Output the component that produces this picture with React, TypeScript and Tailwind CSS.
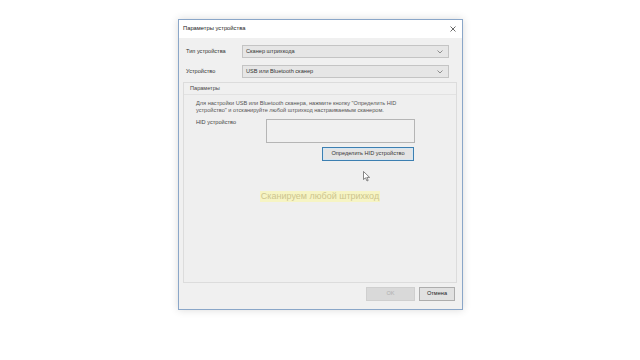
import React from "react";

function Combo({ text }: { text: string }) {
  return (
    <div className="flex h-[13px] flex-1 items-center justify-between border border-[#c4c4c4] bg-[#e6e6e6] pl-[3px] pr-[5px]">
      <span className="text-[5.6px] leading-none text-[#333]">{text}</span>
      <svg width="6" height="4" viewBox="0 0 6 4" className="shrink-0">
        <path d="M0.5 0.5 L3 3 L5.5 0.5" fill="none" stroke="#777" strokeWidth="0.8" />
      </svg>
    </div>
  );
}

export default function App() {
  return (
    <div
      className="h-[360px] w-[640px] overflow-hidden bg-white pl-[178px] pt-[19px]"
      style={{ fontFamily: '"Liberation Sans", Arial, sans-serif' }}
    >
      <div className="flex h-[291px] w-[285px] flex-col border border-[#8aa6c8] bg-[#f0f0f0] shadow-[0_0_8px_rgba(0,0,0,0.15)]">
        {/* Title bar */}
        <div className="flex h-[18px] items-center justify-between bg-white pl-[4px] pr-[6px]">
          <span className="text-[5.8px] leading-none text-[#222]">Параметры устройства</span>
          <svg width="6" height="6" viewBox="0 0 6 6">
            <path d="M0.5 0.5 L5.5 5.5 M5.5 0.5 L0.5 5.5" stroke="#444" strokeWidth="0.8" />
          </svg>
        </div>
        {/* Client */}
        <div className="flex flex-1 flex-col pl-[4px] pr-[5px] pt-[7px]">
          <div className="flex items-center pl-[3px] pr-[8px]">
            <span className="w-[56px] text-[5.6px] leading-none text-[#333]">Тип устройства</span>
            <Combo text="Сканер штрихкода" />
          </div>
          <div className="mt-[7px] flex items-center pl-[3px] pr-[8px]">
            <span className="w-[56px] text-[5.6px] leading-none text-[#333]">Устройство</span>
            <Combo text="USB или Bluetooth сканер" />
          </div>
          {/* Group */}
          <div className="mt-[4px] flex h-[201px] flex-col border border-[#dcdcdc]">
            <div className="flex h-[12px] items-center border-b border-[#e2e2e2] pl-[6px]">
              <span className="text-[5.6px] leading-none text-[#444]">Параметры</span>
            </div>
            <div className="flex flex-1 flex-col bg-[#efefef] pl-[12px] pt-[5px]">
              <div className="text-[5.6px] leading-[7px] text-[#555]">
                <div>Для настройки USB или Bluetooth сканера, нажмите кнопку "Определить HID</div>
                <div>устройство" и отсканируйте любой штрихкод настраиваемым сканером.</div>
              </div>
              <div className="mt-[5px] flex">
                <span className="mt-[1px] w-[70px] text-[5.6px] leading-none text-[#444]">HID устройство</span>
                <div className="h-[24px] w-[149px] border border-[#b5b5b5] bg-[#f0f0f0]" />
              </div>
              <div className="mt-[4px] flex pl-[126px]">
                <div className="flex h-[14px] w-[92px] items-center justify-center border border-[#3c7fb1] bg-[#e4e4e4] shadow-[inset_0_0_0_1px_#d6e6f2]">
                  <span className="text-[5.6px] leading-none text-[#333]">Определить HID устройство</span>
                </div>
              </div>
              <div className="mt-[10px] flex pl-[167px]">
                <svg width="8" height="11" viewBox="0 0 8 11">
                  <path d="M0.5 0.5 L0.5 8.5 L2.5 6.8 L4 10 L5.2 9.4 L3.8 6.4 L6.6 6.4 Z" fill="#fff" stroke="#555" strokeWidth="0.7" />
                </svg>
              </div>
              <div className="mt-[9px] flex justify-center pr-[12px]">
                <span className="bg-[#f6f4c4] px-[1px] text-[9px] leading-[11px] text-[#cdc58e]">
                  Сканируем любой штрихкод
                </span>
              </div>
            </div>
          </div>
          {/* Buttons */}
          <div className="mt-[4px] flex justify-end gap-[4px] pr-[2px]">
            <div className="flex h-[14px] w-[49px] items-center justify-center border border-[#cfcfcf] bg-[#d9d9d9]">
              <span className="text-[5.6px] leading-none text-[#b0b0b0]">OK</span>
            </div>
            <div className="flex h-[14px] w-[36px] items-center justify-center border border-[#adadad] bg-[#e1e1e1]">
              <span className="text-[5.6px] leading-none text-[#222]">Отмена</span>
            </div>
          </div>
        </div>
      </div>
    </div>
  );
}
